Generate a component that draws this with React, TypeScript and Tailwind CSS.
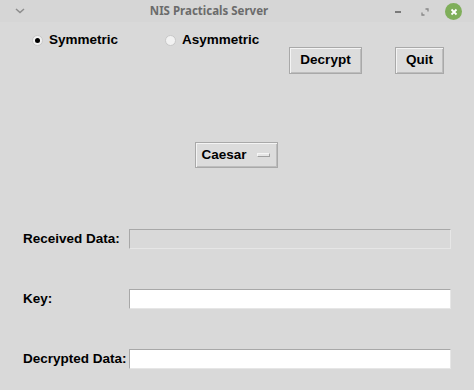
import React from "react";

const tkFont = { fontFamily: '"Liberation Sans", Arial, sans-serif' };

// Tk-style raised button
const TkButton = ({ label, width }: { label: string; width: string }) => (
  <div
    className={`${width} h-[27px] flex items-center justify-center border border-[#a9a9a9] bg-[#dcdcdc] shadow-[inset_1px_1px_0_#f4f4f4,inset_-1px_-1px_0_#bdbdbd] text-[13.5px] font-bold text-black`}
  >
    {label}
  </div>
);

const Radio = ({ label, checked }: { label: string; checked?: boolean }) => (
  <div className="flex items-center gap-[6px]">
    <span className="w-[11px] h-[11px] rounded-full bg-[#f2f2f2] border border-[#c8c8c8] flex items-center justify-center">
      {checked && <span className="w-[5px] h-[5px] rounded-full bg-black" />}
    </span>
    <span className="text-[13.5px] font-bold text-black">{label}</span>
  </div>
);

const Field = ({ label, disabled }: { label: string; disabled?: boolean }) => (
  <div className="flex items-center h-[20px]">
    <span className="w-[105px] pl-[23px] text-[13.5px] font-bold text-black whitespace-nowrap">
      {label}
    </span>
    <div
      className={`ml-[24px] w-[322px] h-[20px] border border-[#a8a8a8] border-r-[#e6e6e6] border-b-[#e6e6e6] ${disabled ? "bg-[#d9d9d9]" : "bg-white"}`}
    />
  </div>
);

export default function App() {
  return (
    <div className="w-[474px] h-[390px] bg-[#d9d9d9] flex flex-col overflow-hidden">
      {/* window title bar */}
      <div
        className="h-[22px] bg-[#d6d6d6] flex items-center relative"
        style={{ fontFamily: '"Noto Sans", sans-serif' }}
      >
        <svg className="absolute left-[15px] top-[8px]" width="10" height="6" viewBox="0 0 10 6">
          <path d="M1 1 L5 4.5 L9 1" stroke="#8c8c8c" strokeWidth="1.5" fill="none" />
        </svg>
        <div className="flex-1 text-center pr-[56px] text-[11.5px] font-bold text-[#6b6b6b]">
          NIS Practicals Server
        </div>
        <div className="absolute left-[395px] top-[3px] flex items-center">
          <span className="w-[6px] h-[2px] bg-[#7a7a7a]" />
          <svg className="ml-[20px]" width="8" height="8" viewBox="0 0 8 8">
            <path d="M4.5 1 H7 V3.5 M3.5 7 H1 V4.5" stroke="#888" strokeWidth="1.3" fill="none" />
          </svg>
          <span className="ml-[16px] w-[17px] h-[17px] rounded-full bg-[#7fae5a] flex items-center justify-center">
            <svg width="8" height="8" viewBox="0 0 8 8">
              <path d="M1.5 1.5 L6.5 6.5 M6.5 1.5 L1.5 6.5" stroke="#fff" strokeWidth="1.8" />
            </svg>
          </span>
        </div>
      </div>

      <div className="flex-1 flex flex-col" style={tkFont}>
        <div className="flex items-start">
          <div className="ml-[32px] mt-[8px] flex items-center gap-[47px]">
            <Radio label="Symmetric" checked />
            <Radio label="Asymmetric" />
          </div>
          <div className="ml-auto mr-[30px] mt-[25px] flex gap-[33px]">
            <TkButton label="Decrypt" width="w-[73px]" />
            <TkButton label="Quit" width="w-[49px]" />
          </div>
        </div>

        <div className="mt-[68px] flex justify-center pr-[2px]">
          <div className="w-[83px] h-[26px] flex items-center border border-[#a9a9a9] bg-[#dcdcdc] shadow-[inset_1px_1px_0_#f4f4f4,inset_-1px_-1px_0_#bdbdbd] pl-[6px]">
            <span className="text-[13.5px] font-bold text-black">Caesar</span>
            <span className="ml-[10px] w-[13px] h-[4px] bg-[#e6e6e6] border border-[#a0a0a0] border-t-[#f6f6f6] border-l-[#f6f6f6]" />
          </div>
        </div>

        <div className="mt-[61px] flex flex-col gap-[40px]">
          <Field label="Received Data:" disabled />
          <Field label="Key:" />
          <Field label="Decrypted Data:" />
        </div>
      </div>
    </div>
  );
}
